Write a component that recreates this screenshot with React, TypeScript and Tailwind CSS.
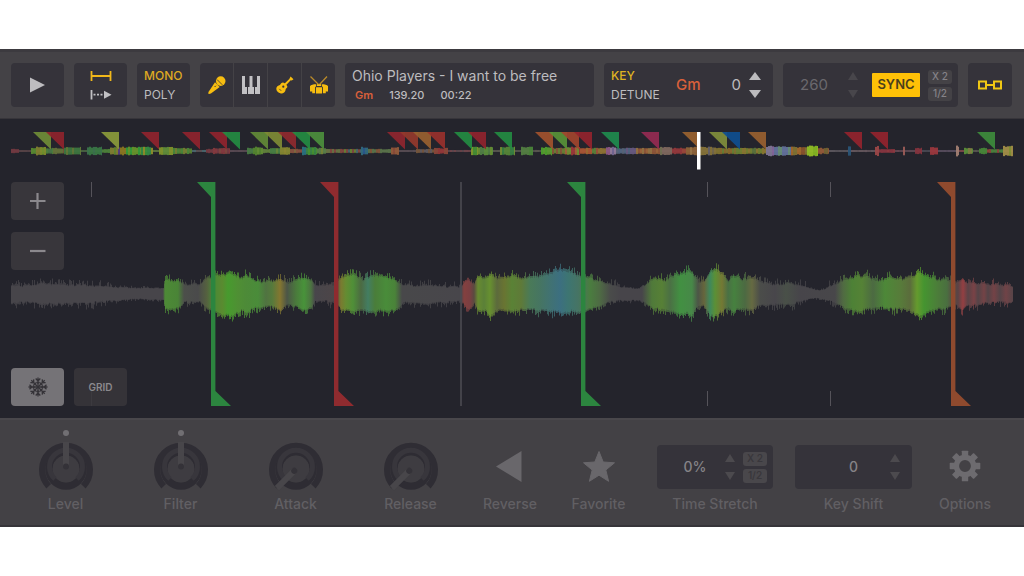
import React from "react";

const TRACK_MARKERS: [number, string][] = [
  [33, "#6f8c37"], [46, "#8e232c"], [101, "#8b9a3a"], [141, "#8f232d"], [182, "#8f232d"],
  [209, "#8f232d"], [222, "#238b42"], [250, "#628a37"], [264, "#7e8a35"], [278, "#8f2a2e"],
  [292, "#238b42"], [306, "#4c8f3c"], [387, "#8f262e"], [400, "#93392c"], [413, "#98602f"],
  [427, "#98302c"], [454, "#238b42"], [468, "#8f232d"], [494, "#238b42"], [535, "#a0522d"],
  [549, "#589138"], [561, "#a0452d"], [574, "#92242d"], [601, "#1f8b4d"], [641, "#952b52"],
  [682, "#99622f"], [709, "#808e3b"], [722, "#0f4f8f"], [748, "#98602f"], [844, "#92242d"],
  [870, "#92242d"], [977, "#3d8b3b"],
];

/* start, end, half height, colours */
const TRACK_SEGMENTS: [number, number, number, string[]][] = [
  [11, 19, 2, ["#8a4348", "#7a3b42"]],
  [19, 31, 1, ["#5d4548"]],
  [31, 36, 3, ["#5d9430"]],
  [36, 46, 4, ["#8a9a2c", "#7aa02c", "#8b8a30"]],
  [46, 53, 3, ["#4f8a3c", "#4a7d48"]],
  [53, 64, 3, ["#7a5a36", "#6b7a3a"]],
  [64, 81, 4, ["#3f7f41", "#678238", "#4f8a38"]],
  [81, 87, 1, ["#4b6c42"]],
  [87, 102, 4, ["#3b8245", "#3d7a50"]],
  [102, 110, 2, ["#4f8a38"]],
  [110, 118, 4, ["#67912f", "#8a8a30"]],
  [118, 126, 4, ["#8a6f2c", "#5c3f88", "#97801f"]],
  [126, 141, 4, ["#3fa52a", "#35a83a", "#6da12a"]],
  [141, 153, 4, ["#3c9c3a", "#9a9a2a", "#349446"]],
  [153, 159, 1, ["#5e7a3c"]],
  [159, 173, 4, ["#67993a", "#8ba02a", "#4e9138"]],
  [173, 192, 3, ["#5c8a33", "#4d923a", "#7d8a33"]],
  [192, 206, 1, ["#5f5557", "#4b6c72"]],
  [206, 213, 2, ["#7b3b42"]],
  [213, 230, 3, ["#8f3b40", "#8a4a40", "#7d3b44"]],
  [230, 247, 1, ["#5d4c55"]],
  [247, 253, 3, ["#4b8446"]],
  [253, 263, 4, ["#58912f", "#6a9a35"]],
  [263, 270, 2, ["#658b3b"]],
  [270, 280, 3, ["#4b8a44", "#6f9437"]],
  [280, 290, 4, ["#9a9430", "#8f9230", "#a07a35"]],
  [290, 302, 2, ["#8f5540", "#8a7040"]],
  [302, 317, 4, ["#3b8f48", "#2a7a88", "#4aa030"]],
  [317, 326, 3, ["#7f9038", "#5f8a4a"]],
  [326, 340, 2, ["#8a4a40", "#6f7a44"]],
  [340, 361, 2, ["#8a4a40", "#4b6c72", "#6f8a34"]],
  [361, 368, 4, ["#2a5e96", "#317288"]],
  [368, 391, 2, ["#8a5a3a", "#5e7a4b", "#7d4d44"]],
  [391, 399, 4, ["#98503a", "#a0603c"]],
  [399, 416, 1, ["#5a4f55"]],
  [416, 434, 2, ["#7d5a3c", "#665f62"]],
  [434, 448, 3, ["#a03838", "#964a3a"]],
  [448, 471, 1, ["#5f4a50", "#74464b"]],
  [471, 478, 4, ["#4a9a34", "#8ba52a"]],
  [478, 493, 4, ["#6f9a34", "#5f9a3c", "#558a46"]],
  [493, 500, 1, ["#5a5a50"]],
  [500, 515, 4, ["#7a9a34", "#5a9038", "#3a8a44"]],
  [515, 521, 1, ["#5a5a50"]],
  [521, 533, 4, ["#4d8f3a", "#588a44"]],
  [533, 541, 1, ["#5a5a50"]],
  [541, 552, 4, ["#4fae2a", "#5fa830"]],
  [552, 565, 3, ["#8f5a38", "#718a34"]],
  [565, 580, 4, ["#7a9a34", "#b06a3a", "#a83a3a"]],
  [580, 592, 3, ["#b85a34", "#ad7230"]],
  [592, 606, 3, ["#9a7a34", "#5f8a3a", "#a8553a"]],
  [606, 616, 4, ["#a086a8", "#9a5f8f", "#7d6fa0"]],
  [616, 636, 3, ["#556b88", "#6f5f8a", "#5d6b80"]],
  [636, 660, 3, ["#a07a44", "#a86a3a", "#9a5a38"]],
  [660, 672, 4, ["#8a7064", "#7d7a58"]],
  [672, 686, 3, ["#a03a3c", "#a84a3a"]],
  [686, 700, 4, ["#a8804a", "#9a6a3a"]],
  [700, 716, 4, ["#7a6f50", "#8f7a3a", "#6f6a70"]],
  [716, 740, 3, ["#8a7a30", "#94702c", "#6f8a34"]],
  [740, 766, 3, ["#7a8a30", "#948030", "#5f7a3c"]],
  [766, 774, 5, ["#8f6fa8", "#8a80a0"]],
  [774, 791, 5, ["#6f9a80", "#a8a8a0", "#6a7aa8"]],
  [791, 807, 4, ["#8a7a34", "#b0702c", "#94582c"]],
  [807, 818, 5, ["#8fc820", "#9fd024"]],
  [818, 829, 3, ["#a05f38", "#7d6a34"]],
  [829, 848, 1, ["#5f5a60"]],
  [848, 851, 5, ["#2a5a80"]],
  [851, 875, 1, ["#6a5a60"]],
  [875, 879, 5, ["#a84a4a"]],
  [879, 895, 2, ["#8f3540", "#9a3a40"]],
  [895, 903, 1, ["#6a4a55"]],
  [903, 905, 5, ["#a8625c"]],
  [905, 915, 1, ["#5f4a55"]],
  [915, 922, 3, ["#8f3540"]],
  [922, 930, 1, ["#4a4a55"]],
  [930, 938, 4, ["#a83a40"]],
  [938, 956, 1, ["#5a4f60"]],
  [956, 959, 5, ["#b08a7a"]],
  [959, 964, 1, ["#8a4a4a"]],
  [964, 973, 3, ["#8a8a44", "#5f9a3a"]],
  [973, 979, 1, ["#5a5a50"]],
  [979, 987, 3, ["#4a9038", "#5f8a44"]],
  [987, 1003, 2, ["#98483c", "#4d8a3c"]],
  [1003, 1013, 5, ["#8fa034", "#b09a4a"]],
];

/* x, height above the axis, height below the axis */
const ENVELOPE: [number, number, number][] = [
  [11, 9, 10], [22, 8, 8], [40, 11, 10], [60, 9, 10], [85, 9, 9], [110, 7, 7], [140, 6, 5],
  [163, 6, 6], [165, 13, 15], [172, 14, 15], [180, 13, 13], [184, 9, 8], [200, 10, 8],
  [207, 16, 14], [215, 19, 17], [222, 20, 21], [230, 21, 23], [240, 17, 17], [246, 18, 19],
  [255, 13, 14], [270, 12, 12], [280, 15, 17], [288, 10, 10], [298, 15, 14], [305, 16, 16],
  [311, 14, 14], [315, 8, 7], [333, 9, 7], [340, 15, 15], [348, 18, 17], [355, 19, 18],
  [362, 14, 15], [370, 18, 18], [385, 18, 17], [395, 14, 17], [402, 9, 9], [430, 8, 9],
  [461, 7, 7], [465, 13, 14], [469, 14, 16], [474, 10, 10], [477, 18, 16], [485, 15, 18],
  [490, 20, 22], [500, 15, 15], [512, 19, 18], [520, 15, 16], [530, 17, 16], [545, 19, 17],
  [555, 23, 18], [562, 25, 19], [570, 22, 18], [580, 19, 18], [590, 16, 16], [600, 12, 12],
  [610, 9, 8], [620, 7, 7], [638, 5, 6], [645, 10, 9], [652, 15, 14], [665, 14, 16],
  [672, 19, 18], [680, 20, 20], [692, 23, 21], [698, 12, 12], [703, 12, 10], [710, 22, 22],
  [716, 25, 23], [722, 20, 18], [728, 12, 13], [733, 19, 18], [742, 15, 15], [752, 16, 15],
  [760, 12, 12], [775, 9, 10], [790, 11, 10], [805, 7, 6], [815, 4, 4], [822, 4, 5],
  [832, 9, 8], [845, 14, 14], [857, 18, 17], [867, 17, 16], [875, 13, 13], [890, 16, 15],
  [900, 15, 15], [913, 18, 18], [918, 22, 23], [927, 18, 18], [940, 14, 15], [950, 14, 14],
  [955, 11, 11], [962, 15, 16], [967, 12, 12], [985, 10, 9], [1012, 8, 8],
];

const TONES: [number, string][] = [
  [11, "#47454a"], [163, "#47454a"], [165, "#4d8a36"], [178, "#4a8437"], [184, "#4c4f4a"],
  [198, "#4a4a4b"], [207, "#55623f"], [214, "#4a8a36"], [222, "#5a8a30"], [228, "#479a2e"],
  [238, "#4f8f34"], [246, "#4d8a38"], [258, "#4a8c3a"], [266, "#507341"], [272, "#557a3c"],
  [280, "#847630"], [287, "#4c5547"], [296, "#4a7a3c"], [304, "#48933a"], [311, "#4c7341"],
  [315, "#48464b"], [335, "#4d4548"], [341, "#7a7a30"], [346, "#648c32"], [353, "#4f8f38"],
  [361, "#4c6a42"], [368, "#437d62"], [375, "#4a7d3a"], [386, "#498c3a"], [395, "#4a8339"],
  [402, "#48484a"], [461, "#48464b"], [464, "#84403f"], [470, "#7a3f42"], [474, "#5a4a40"],
  [478, "#678a30"], [484, "#5b8038"], [490, "#679030"], [497, "#5c6a3c"], [504, "#697432"],
  [512, "#5a8236"], [521, "#5f7a38"], [530, "#4a7a58"], [540, "#467562"], [550, "#417272"],
  [560, "#3c6f80"], [568, "#3d7572"], [578, "#467464"], [590, "#4a7d3f"], [600, "#4e6a44"],
  [610, "#4a4c4a"], [620, "#47454a"], [642, "#47454a"], [652, "#507a3a"], [662, "#578036"],
  [670, "#4b7044"], [680, "#429042"], [692, "#478848"], [698, "#4c5547"], [704, "#66653c"],
  [710, "#3f885c"], [715, "#5b9036"], [722, "#747834"], [728, "#4a7044"], [734, "#46813f"],
  [745, "#4c6a42"], [752, "#666a42"], [760, "#4b4d4a"], [775, "#48464b"], [786, "#495048"],
  [800, "#47454a"], [835, "#48474a"], [843, "#506a42"], [852, "#4d8136"], [862, "#558236"],
  [873, "#4c6a42"], [885, "#4d8838"], [900, "#577c3a"], [910, "#5b6c3c"], [917, "#659a2e"],
  [924, "#459430"], [938, "#4c7c3a"], [947, "#4a6f40"], [953, "#5a4a44"], [958, "#5a4345"],
  [963, "#943f42"], [968, "#5a4347"], [974, "#7a4246"], [978, "#544448"], [984, "#744346"],
  [988, "#544448"], [994, "#744246"], [1000, "#544448"], [1006, "#704347"], [1012, "#5a4448"],
];

const CUES: [number, string][] = [
  [211, "#2c853f"],
  [334, "#8f2b2f"],
  [581, "#2c853f"],
  [951, "#8f4a2e"],
];

function noise(n: number) {
  const v = Math.sin(n * 12.9898) * 43758.5453;
  return v - Math.floor(v);
}

function levelAt(x: number, side: 1 | 2) {
  let i = 1;
  while (i < ENVELOPE.length - 1 && ENVELOPE[i][0] < x) i++;
  const a = ENVELOPE[i - 1];
  const b = ENVELOPE[i];
  const t = (x - a[0]) / (b[0] - a[0]);
  return a[side] + (b[side] - a[side]) * t;
}

function wavePath(axis: number, spiky: boolean) {
  let d = "";
  for (let x = 11; x < 1013; x++) {
    const scale = (side: 1 | 2, seed: number) => {
      const base = levelAt(x, side);
      const n = noise(seed);
      const swell = noise(Math.floor((x + side) / 3) * 2.3 + side) * 2.5 - 1;
      const calm = base < 7 ? 0.4 : 1;
      return spiky ? base + (swell + n * n * n * 6) * calm : base * (0.88 + n * 0.12) + swell * 0.8 * calm;
    };
    const up = scale(1, x + 0.3);
    const down = scale(2, x * 1.7 + 5);
    d += `M${x} ${(axis - up).toFixed(1)}h1v${(up + down).toFixed(1)}h-1z`;
  }
  return d;
}

function Overview() {
  return (
    <svg viewBox="0 0 1024 56" preserveAspectRatio="none" className="block h-14 w-full" role="img" aria-label="Track overview">
      <rect x="11" y="31.5" width="1002" height="1" fill="#4a444c" />
      {TRACK_SEGMENTS.map(([from, to, h, colours]) => {
        const bars = [];
        for (let x = from; x < to; x += 2) {
          const half = Math.max(0.8, h * (0.8 + noise(x) * 0.3));
          bars.push(
            <rect key={x} x={x} y={32 - half} width={Math.min(2, to - x)} height={half * 2}
              fill={colours[Math.floor(noise(x * 3.1) * colours.length)]} fillOpacity="0.85" />
          );
        }
        return <g key={from}>{bars}</g>;
      })}
      {TRACK_MARKERS.map(([x, colour]) => (
        <path key={x} d={`M${x} 13h18v17.5z`} fill={colour} fillOpacity="0.93" />
      ))}
      <rect x="697" y="13" width="3.5" height="37.5" fill="#fff" />
    </svg>
  );
}

function Waveform() {
  return (
    <svg viewBox="0 0 1024 243" preserveAspectRatio="none" className="col-start-1 row-start-1 block h-[243px] w-full" role="img" aria-label="Waveform">
      <defs>
        <linearGradient id="tones" gradientUnits="userSpaceOnUse" x1="0" x2="1024" y1="0" y2="0">
          {TONES.map(([x, colour]) => <stop key={x} offset={x / 1024} stopColor={colour} />)}
        </linearGradient>
      </defs>
      {[91, 707, 830].map((x) => (
        <path key={x} d={`M${x + 0.5} 7v15M${x + 0.5} 216v15`} stroke="#55535a" strokeWidth="1" />
      ))}
      <path d={wavePath(119, true)} fill="url(#tones)" fillOpacity="0.75" />
      <path d={wavePath(119, false)} fill="url(#tones)" />
      <path d="M461 7v224" stroke="#4c4b52" strokeWidth="1.6" />
      {CUES.map(([x, colour]) => (
        <path key={x} d={`M${x - 14} 7h18.4v209l15.6 15h-20v-209z`} fill={colour} />
      ))}
    </svg>
  );
}

function Stepper({ name, tone, size }: { name: string; tone: string; size: "lg" | "sm" }) {
  const box = size === "lg" ? "h-2 w-3" : "h-2 w-2.5";
  return (
    <span className={`flex flex-col gap-2.5 ${tone}`}>
      <button type="button" aria-label={`${name} up`} className="block">
        <svg viewBox="0 0 12 8" preserveAspectRatio="none" className={`block ${box}`}><path d="M6 0l6 8H0z" fill="currentColor" /></svg>
      </button>
      <button type="button" aria-label={`${name} down`} className="block">
        <svg viewBox="0 0 12 8" preserveAspectRatio="none" className={`block ${box}`}><path d="M6 8l6-8H0z" fill="currentColor" /></svg>
      </button>
    </span>
  );
}

function MicIcon() {
  return (
    <svg viewBox="0 0 20 20" className="size-5">
      <g fill="#f7bd10">
        <circle cx="13.7" cy="6.1" r="4.8" />
        <path d="M8 7.200l4.700 4.700-8.800 6.500-1.900.7-.9-.8.7-1.900z" />
      </g>
      <path d="M10 4.500l5.300 5.300" stroke="#35333a" strokeWidth="0.800" />
      <path d="M7.600 12l1.200-1.200" stroke="#35333a" strokeWidth="1" />
    </svg>
  );
}

function KeysIcon() {
  return (
    <svg viewBox="0 0 18 18" className="size-[18px]" fill="#c2c1c4">
      <path d="M0 0h3v11h2v7H0zM7.500 0h3v11H12v7H6v-7h1.500zM15 0h3v18h-5v-7h2z" />
    </svg>
  );
}

function GuitarIcon() {
  return (
    <svg viewBox="0 0 20 20" className="size-5" fill="#f7bd10">
      <path d="M15.600 1.400l2.900 2.900-1.800 1.100-1-.1-5 5.200-1.600-1.600 5.200-5z" />
      <path d="M6.200 8.200c1.300-1.200 2.600-.7 3.100-.2l2.600 2.500c.7.900.6 1.900-.2 2.500-1 .7-1 1.200-1.200 2.200-.4 2-2.400 3.700-4.600 3.300C3 18 1.500 16 1.300 14c-.2-2 1.400-3.600 3-3.800.9-.2 1.300-1.300 1.900-2z" />
      <circle cx="8.300" cy="11.700" r="1.100" fill="#35333a" />
      <path d="M4.300 13.900l1.900 1.900" stroke="#35333a" strokeWidth="0.800" />
    </svg>
  );
}

function DrumIcon() {
  return (
    <svg viewBox="0 0 20 20" className="size-5">
      <path d="M1.500 1.500l8 8M18 1.500l-7.500 8" stroke="#b98a2a" strokeWidth="1.300" />
      <g fill="#f7bd10">
        <path d="M1 11.200c.6-1.500 3.600-1.900 6-1.900v1.900l-.9 1v6H3.200v-1.600H1z" />
        <path d="M19 11.200c-.6-1.500-3.600-1.900-6-1.900v1.900l.9 1v6h2.900v-1.600H19z" />
        <path d="M7.800 9.300h4.400v1.600H7.800zM7 12.200h6v6.400H7z" />
      </g>
    </svg>
  );
}

function FlakeIcon() {
  return (
    <svg viewBox="-10 -10 20 20" className="size-5" fill="none" stroke="#353338" strokeWidth="1.300">
      {[0, 45, 90, 135, 180, 225, 270, 315].map((a) => (
        <g key={a} transform={`rotate(${a})`}>
          <path d="M0 0v-9.500M-2.300-8.500L0-6l2.300-2.500M-1.500-5L0-3.400 1.500-5" />
        </g>
      ))}
    </svg>
  );
}

function GearIcon() {
  return (
    <svg viewBox="-16 -16 32 32" className="size-8" fill="#6d6b6f">
      {[0, 45, 90, 135, 180, 225, 270, 315].map((a) => (
        <rect key={a} x="-3.200" y="-15.300" width="6.400" height="7" rx="0.600" transform={`rotate(${a})`} />
      ))}
      <circle r="8.600" fill="none" stroke="#6d6b6f" strokeWidth="5.400" />
    </svg>
  );
}

const CAPTION = "text-sm leading-4 font-medium";

function Knob({ label, angle, dot }: { label: string; angle: number; dot?: boolean }) {
  return (
    <label className="flex flex-col items-center">
      <span className="relative block h-[70px]">
        <svg viewBox="0 0 56 70" className="block h-[70px] w-14">
          {dot && <circle cx="28" cy="11" r="3" fill="#716f73" />}
          <circle cx="28" cy="47" r="17" fill="none" stroke="#2e2c33" strokeWidth="7.500" />
          <circle cx="28" cy="47" r="13.500" fill="#3e3c41" />
          <path d="M10.700 64.200A23.800 23.800 0 1 1 45.300 64.200" fill="none" stroke="#2f2d34" strokeWidth="6.400" />
          <path d="M17 57A16.500 16.500 0 1 1 39 57" fill="none" stroke="#38363c" strokeWidth="5" />
          <path d="M28 45V20" stroke="#48464a" strokeWidth="6" transform={`rotate(${angle} 28 47)`} />
          <circle cx="28" cy="44.500" r="3" fill="#343238" transform={`rotate(${angle} 28 47)`} />
        </svg>
        <input type="range" min="-135" max="135" defaultValue={angle} className="absolute inset-0 w-full cursor-pointer opacity-0" />
      </span>
      <span className={`pt-1 ${CAPTION}`}>{label}</span>
    </label>
  );
}

const PANEL = "h-11 rounded-sm bg-[#35333a]";
const PAD = "flex h-[38px] w-[53px] items-center justify-center rounded-sm";

export default function App() {
  return (
    <main className="bg-white py-[49px] font-['Inter','Liberation_Sans',sans-serif] text-[#bdbcbf]">
      <header className="flex gap-2.5 border-t-[3px] border-b border-t-[#3c3a3f] border-b-[#37353a] bg-[#444246] pt-[11px] pr-3 pb-[11px] pl-[11px]">
        <button type="button" aria-label="Play" className={`flex w-[53px] shrink-0 items-center justify-center ${PANEL}`}>
          <svg viewBox="0 0 16 16" className="size-4"><path d="M0 0.500v15l15-7.500z" fill="#bdbcbf" /></svg>
        </button>
        <button type="button" aria-label="Playback mode" className={`flex w-[53px] shrink-0 items-center justify-center ${PANEL}`}>
          <svg viewBox="0 0 22 32" className="h-8 w-[22px]" fill="none" strokeWidth="1.800">
            <path d="M1.500 2v10M20.500 2v10M1.500 7h19" stroke="#f2b81a" />
            <path d="M1.500 21v9.500" stroke="#c2c1c4" />
            <path d="M3.500 25.700h11" stroke="#c2c1c4" strokeDasharray="2 1.500" />
            <path d="M14 21.700v8l7.500-4z" fill="#c2c1c4" />
          </svg>
        </button>
        <div className={`flex w-[53px] shrink-0 flex-col justify-center px-[7px] text-xs ${PANEL}`}>
          <button type="button" className="text-left leading-[19px] font-medium text-[#dfa922]">MONO</button>
          <button type="button" className="text-left leading-[19px]">POLY</button>
        </div>
        <div className="grid h-11 w-[135px] shrink-0 grid-cols-4 gap-px overflow-hidden rounded-sm bg-[#444246]">
          <button type="button" aria-label="Vocals" className="flex items-center justify-center bg-[#35333a]"><MicIcon /></button>
          <button type="button" aria-label="Keys" className="flex items-center justify-center bg-[#35333a]"><KeysIcon /></button>
          <button type="button" aria-label="Guitar" className="flex items-center justify-center bg-[#35333a]"><GuitarIcon /></button>
          <button type="button" aria-label="Drums" className="flex items-center justify-center bg-[#35333a]"><DrumIcon /></button>
        </div>
        <section className={`min-w-0 flex-1 px-[7px] pt-[3px] ${PANEL}`}>
          <h1 className="truncate text-sm leading-5">Ohio Players - I want to be free</h1>
          <p className="flex gap-4 pl-[3px] text-[11px] leading-[18px]">
            <span className="font-semibold text-[#d9603a]">Gm</span>
            <span className="font-medium">139.20</span>
            <span className="font-medium">00:22</span>
          </p>
        </section>
        <div className={`flex w-[169px] shrink-0 items-center pr-3 pl-[7px] ${PANEL}`}>
          <div className="flex w-[65px] flex-col text-xs">
            <button type="button" className="text-left leading-[19px] font-medium text-[#dfb322]">KEY</button>
            <button type="button" className="text-left leading-[19px]">DETUNE</button>
          </div>
          <span className="text-[15px] font-medium text-[#d9603a]">Gm</span>
          <input aria-label="Key detune" defaultValue="0" className="mr-2 ml-auto w-6 bg-transparent text-right text-[15px] outline-none" />
          <Stepper name="Key detune" tone="text-[#bdbcbf]" size="lg" />
        </div>
        <div className={`flex w-[175px] shrink-0 items-center pr-[6px] pl-[17px] ${PANEL}`}>
          <input aria-label="Tempo" defaultValue="260" className="w-12 bg-transparent text-[15px] text-[#6a686d] outline-none" />
          <Stepper name="Tempo" tone="text-[#48464b]" size="sm" />
          <button type="button" className="ml-auto h-6 w-12 rounded-[1px] bg-[#ffc107] text-[13px] font-semibold text-[#4b3f1c]">SYNC</button>
          <span className="ml-2 flex flex-col gap-[3px] text-[10px] font-medium text-[#858388]">
            <button type="button" className="flex h-3.5 w-6 items-center justify-center rounded-[3px] bg-[#444246]">X 2</button>
            <button type="button" className="flex h-3.5 w-6 items-center justify-center rounded-[3px] bg-[#444246]">1/2</button>
          </span>
        </div>
        <button type="button" aria-label="Link" className={`flex w-11 shrink-0 items-center justify-center ${PANEL}`}>
          <svg viewBox="0 0 26 12" className="h-3 w-[26px]" fill="none" stroke="#f0c814" strokeWidth="2">
            <path d="M2 2.500h7v7H2zM17 2.500h7v7h-7zM9 6h8" />
          </svg>
        </button>
      </header>

      <section className="bg-[#24242c]">
        <Overview />
        <div className="grid grid-cols-1">
          <Waveform />
          <div className="col-start-1 row-start-1 flex flex-col justify-between pt-[7px] pb-3 pl-[11px]">
            <div className="flex flex-col gap-3">
              <button type="button" aria-label="Zoom in" className={`${PAD} bg-[#38363b]`}>
                <svg viewBox="0 0 16 16" className="size-4" stroke="#8b898d" strokeWidth="2.200"><path d="M7.500 0v16M-0.500 8h16" /></svg>
              </button>
              <button type="button" aria-label="Zoom out" className={`${PAD} bg-[#38363b]`}>
                <svg viewBox="0 0 16 16" className="size-4" stroke="#8b898d" strokeWidth="2.200"><path d="M-0.500 8h16" /></svg>
              </button>
            </div>
            <div className="flex gap-2.5">
              <button type="button" aria-label="Freeze" className={`${PAD} bg-[#757377]`}><FlakeIcon /></button>
              <button type="button" className={`${PAD} bg-[#38363b]/85 text-[10px] font-semibold text-[#8b898d]`}>GRID</button>
            </div>
          </div>
        </div>
      </section>

      <footer className="grid grid-cols-[minmax(0,115fr)_minmax(0,115fr)_minmax(0,115fr)_minmax(0,115fr)_minmax(0,84fr)_minmax(0,93fr)_minmax(0,140fr)_minmax(0,137fr)_minmax(0,86fr)] border-t-2 border-b-2 border-t-[#49474b] border-b-[#363439] bg-[#434145] pt-0.5 pr-4 pb-[13px] pl-2 text-[#615f63]">
        <Knob label="Level" angle={0} dot />
        <Knob label="Filter" angle={0} dot />
        <Knob label="Attack" angle={-135} />
        <Knob label="Release" angle={-135} />
        <button type="button" className="flex flex-col items-center">
          <svg viewBox="0 0 56 70" className="block h-[70px] w-14"><path d="M14 44.500L39.500 29v31z" fill="#69676b" /></svg>
          <span className={`pt-1 ${CAPTION}`}>Reverse</span>
        </button>
        <button type="button" className="flex flex-col items-center">
          <svg viewBox="0 0 56 70" className="block h-[70px] w-14">
            <path d="M28 29.500l4.200 10.500 11.300.8-8.700 7.200 2.800 11.300L28 53.200l-9.600 6.100 2.800-11.300-8.700-7.200 11.300-.8z" fill="#69676b" stroke="#69676b" strokeLinejoin="round" />
          </svg>
          <span className={`pt-1 ${CAPTION}`}>Favorite</span>
        </button>
        <div className="flex flex-col items-center px-3 pt-[23px]">
          <div className={`flex w-full items-center pr-[6px] pl-5 ${PANEL}`}>
            <input id="stretch" defaultValue="0%" className="w-9 min-w-0 bg-transparent text-center text-sm font-medium text-[#858387] outline-none" />
            <span className="ml-auto flex items-center gap-2">
              <Stepper name="Time stretch" tone="text-[#4c4a4e]" size="sm" />
              <span className="flex flex-col gap-[3px] text-[10px] font-semibold text-[#39373c]">
                <button type="button" className="flex h-3.5 w-6 items-center justify-center rounded-[3px] bg-[#49474b]">X 2</button>
                <button type="button" className="flex h-3.5 w-6 items-center justify-center rounded-[3px] bg-[#49474b]">1/2</button>
              </span>
            </span>
          </div>
          <label htmlFor="stretch" className={`pt-[7px] ${CAPTION}`}>Time Stretch</label>
        </div>
        <div className="flex flex-col items-center px-2.5 pt-[23px]">
          <div className={`flex w-full items-center pr-3 pl-[22px] ${PANEL}`}>
            <input id="shift" defaultValue="0" className="min-w-0 flex-1 bg-transparent text-center text-sm font-medium text-[#858387] outline-none" />
            <Stepper name="Key shift" tone="text-[#4c4a4e]" size="sm" />
          </div>
          <label htmlFor="shift" className={`pt-[7px] ${CAPTION}`}>Key Shift</label>
        </div>
        <button type="button" className="flex flex-col items-center">
          <span className="flex h-[70px] items-end pb-[10px]"><GearIcon /></span>
          <span className={`pt-1 ${CAPTION}`}>Options</span>
        </button>
      </footer>
    </main>
  );
}
